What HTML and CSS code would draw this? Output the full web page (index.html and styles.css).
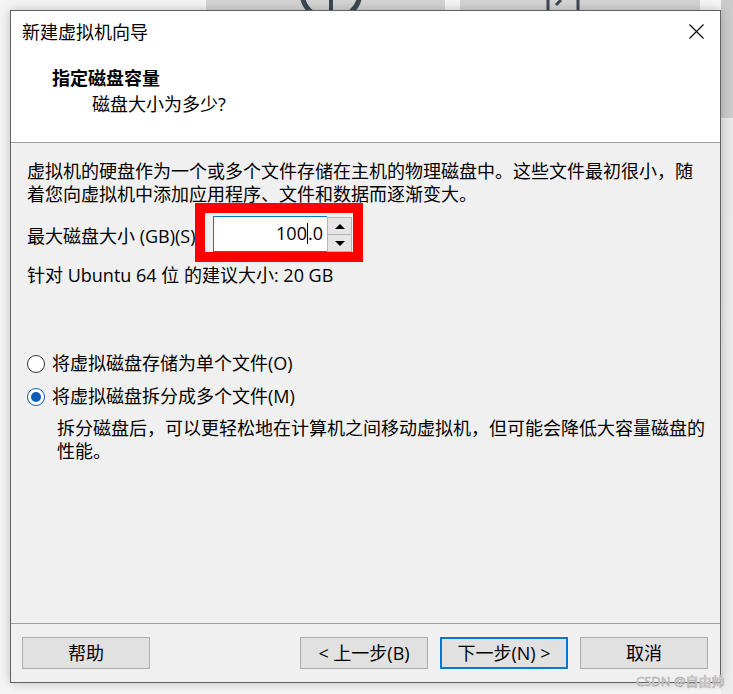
FILE: index.html
```html
<!DOCTYPE html>
<html lang="zh-CN">
<head>
<meta charset="utf-8">
<title>新建虚拟机向导</title>
<link rel="stylesheet" href="styles.css">
</head>
<body>
<div class="desktop">
  <div class="bgwin bgwin-a">
    <svg class="bg-icon-a" width="80" height="14" viewBox="0 0 80 14"><path d="M14 -20 A26 26 0 0 0 20 12" fill="none" stroke="#3d4854" stroke-width="5"/><path d="M66 -20 A26 26 0 0 1 60 12" fill="none" stroke="#3d4854" stroke-width="5"/><path d="M40 0 V14" stroke="#3d4854" stroke-width="4"/></svg>
  </div>
  <div class="bgwin bgwin-b">
    <svg class="bg-icon-b" width="50" height="14" viewBox="0 0 50 14"><path d="M6 0 V14" stroke="#3d4854" stroke-width="3"/><path d="M14 5 L19 0" stroke="#3d4854" stroke-width="3"/><path d="M36 0 V14" stroke="#3d4854" stroke-width="3"/></svg>
  </div>
  <div class="bg-scroll"></div>

  <div class="dialog">
    <div class="titlebar">
      <span class="title">新建虚拟机向导</span>
      <svg class="close" width="15" height="15" viewBox="0 0 15 15"><path d="M0.5 0.5 L14.5 14.5 M14.5 0.5 L0.5 14.5" stroke="#000" stroke-width="1.1" fill="none"/></svg>
    </div>
    <div class="header">
      <div class="h-title">指定磁盘容量</div>
      <div class="h-sub">磁盘大小为多少?</div>
    </div>
    <div class="body">
      <p class="intro">虚拟机的硬盘作为一个或多个文件存储在主机的物理磁盘中。这些文件最初很小，随着您向虚拟机中添加应用程序、文件和数据而逐渐变大。</p>
      <div class="size-row">
        <span class="size-label">最大磁盘大小 (GB)(S):</span>
        <div class="spin">
          <div class="spin-input">100<span class="caret"></span>.0</div>
          <div class="spin-btns">
            <span class="spin-btn"><span class="arrow-up"></span></span>
            <span class="spin-btn"><span class="arrow-down"></span></span>
          </div>
          <div class="annot"></div>
        </div>
      </div>
      <p class="suggest">针对 Ubuntu 64 位 的建议大小: 20 GB</p>
      <div class="options">
        <div class="radio-row"><span class="radio"></span><span>将虚拟磁盘存储为单个文件(O)</span></div>
        <div class="radio-row"><span class="radio checked"></span><span>将虚拟磁盘拆分成多个文件(M)</span></div>
        <p class="desc">拆分磁盘后，可以更轻松地在计算机之间移动虚拟机，但可能会降低大容量磁盘的性能。</p>
      </div>
    </div>
    <div class="footer">
      <button class="btn">帮助</button>
      <span class="spacer"></span>
      <button class="btn">&lt; 上一步(B)</button>
      <button class="btn default">下一步(N) &gt;</button>
      <button class="btn">取消</button>
    </div>
  </div>

  <div class="watermark">CSDN @自由帅</div>
</div>
</body>
</html>
```
FILE: styles.css
```css
* { box-sizing: border-box; }

body {
  margin: 0;
  background: #f5f5f5;
  font-family: "Open Sans", "Noto Sans CJK SC", sans-serif;
  font-size: 18px;
  color: #000;
}

.desktop {
  position: relative;
  width: 733px;
  height: 694px;
  overflow: hidden;
  padding: 10px 0 0 10px;
}

/* background windows behind the dialog */
.bgwin {
  position: absolute;
  top: 0;
  height: 14px;
  background: #d4d4d4;
}
.bgwin-a { left: 206px; width: 239px; }
.bgwin-b { left: 460px; width: 240px; }
.bg-icon-a { position: absolute; left: 85px; top: 0; }
.bg-icon-b { position: absolute; left: 82px; top: 0; }

.bg-scroll {
  position: absolute;
  right: 0;
  top: 0;
  width: 12px;
  height: 694px;
  background: linear-gradient(#cbcbcb 0, #cbcbcb 118px, #e9e9e9 118px, #ececec 100%);
}

/* dialog */
.dialog {
  position: relative;
  width: 711px;
  height: 673px;
  border: 1px solid #626262;
  background: #f0f0f0;
  display: flex;
  flex-direction: column;
  box-shadow: 0 0 10px rgba(0, 0, 0, 0.22);
}

.titlebar {
  height: 45px;
  background: #fff;
  display: flex;
  align-items: center;
  justify-content: space-between;
  padding: 0 16px 6px 11px;
}
.title {
  font-family: "Noto Sans CJK SC", sans-serif;
  font-size: 18px;
  line-height: 24px;
}
.close { display: block; margin-top: 1px; }

.header {
  height: 87px;
  background: #fff;
  border-bottom: 1px solid #a0a0a0;
  padding: 9px 0 0 41px;
}
.h-title {
  font-weight: 700;
  font-family: "Noto Sans CJK SC", sans-serif;
  line-height: 24px;
}
.h-sub {
  margin: 3px 0 0 40px;
  line-height: 24px;
}

.body {
  flex: 1;
  padding: 17px 12px 0 16px;
  border-bottom: 1px solid #a0a0a0;
}
.intro {
  margin: 0;
  line-height: 23px;
}

.size-row {
  display: flex;
  align-items: center;
  margin-top: 10px;
  height: 36px;
}
.size-label {
  width: 186px;
  white-space: nowrap;
  line-height: 23px;
  padding-top: 5px;
}

.spin {
  position: relative;
  display: flex;
  height: 36px;
}
.spin-input {
  width: 114px;
  height: 36px;
  background: #fff;
  border: 1px solid #0078d7;
  border-right: none;
  text-align: right;
  padding-right: 4px;
  line-height: 33px;
  font-size: 18px;
}
.caret {
  display: inline-block;
  width: 1px;
  height: 21px;
  background: #000;
  vertical-align: -4px;
}
.spin-btns {
  width: 25px;
  display: flex;
  flex-direction: column;
  padding-top: 1px;
}
.spin-btn {
  flex: 1;
  background: #e5e5e5;
  border: 1px solid #b4b4b4;
  display: flex;
  align-items: center;
  justify-content: center;
}
.spin-btn + .spin-btn { border-top: none; }
.arrow-up {
  width: 0; height: 0;
  border-left: 5px solid transparent;
  border-right: 5px solid transparent;
  border-bottom: 5px solid #000;
}
.arrow-down {
  width: 0; height: 0;
  border-left: 5px solid transparent;
  border-right: 5px solid transparent;
  border-top: 5px solid #000;
}

/* red annotation rectangle drawn over the screenshot */
.annot {
  position: absolute;
  left: -18px;
  top: -13px;
  width: 168px;
  height: 59px;
  border: 10px solid #ff0000;
}

.suggest {
  margin: 12px 0 0;
  line-height: 23px;
}

.options { margin-top: 65px; }
.radio-row {
  display: flex;
  align-items: center;
  gap: 7px;
  line-height: 23px;
}
.radio-row + .radio-row { margin-top: 10px; }
.radio {
  width: 18px;
  height: 18px;
  border-radius: 50%;
  border: 1px solid #333;
  background: #fff;
  display: flex;
  align-items: center;
  justify-content: center;
}
.radio.checked { border-color: #0a5db8; }
.radio.checked::after {
  content: "";
  width: 10px;
  height: 10px;
  border-radius: 50%;
  background: #0a5db8;
}
.desc {
  margin: 9px 0 0 30px;
  line-height: 23px;
}

.footer {
  height: 58px;
  display: flex;
  gap: 12px;
  padding: 13px 12px 0 11px;
}
.spacer { flex: 1; }
.btn {
  width: 128px;
  height: 32px;
  background: #e1e1e1;
  border: 1px solid #adadad;
  font-family: "Open Sans", "Noto Sans CJK SC", sans-serif;
  font-size: 18px;
  color: #000;
  padding: 0;
  line-height: 28px;
}
.btn.default { border: 2px solid #0078d7; }

.watermark {
  position: absolute;
  left: 636px;
  top: 671px;
  font-family: "Open Sans", "Noto Sans CJK SC", sans-serif;
  font-size: 13px;
  line-height: 20px;
  color: #f4f4f4;
  -webkit-text-stroke: 0.6px #a8a8a8;
  white-space: nowrap;
}
```
